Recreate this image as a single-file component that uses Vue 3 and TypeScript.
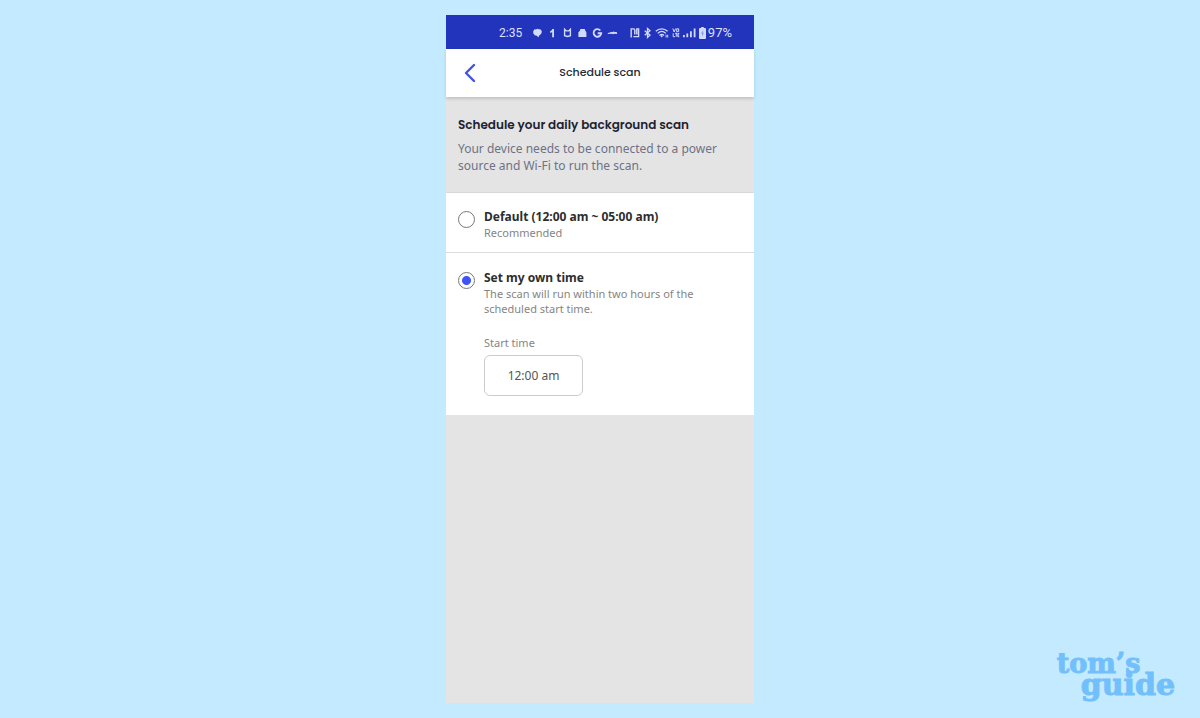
<script setup lang="ts">
import { ref } from 'vue'

interface ScanOption {
  id: string
  title: string
  note: string
}

const options: ScanOption[] = [
  { id: 'default', title: 'Default (12:00 am ~ 05:00 am)', note: 'Recommended' },
  {
    id: 'custom',
    title: 'Set my own time',
    note: 'The scan will run within two hours of the scheduled start time.',
  },
]

const selected = ref<string>('custom')
const startTime = ref<string>('12:00 am')
</script>

<template>
  <div class="stage">
    <main class="phone">
      <div class="status">
        <span class="clock">2:35</span>
        <div class="notices">
          <svg viewBox="0 0 15 12" aria-hidden="true"><path d="M4.5 2.3 6 2.6 7.3 1.7 8.9 2.2 10.7 2.6 11.8 4.3 11.5 6.3 10 8 8.9 8.8 8.5 10.4 6.8 8.7 4.8 8.2 3.3 6.5 3.2 4.2z" /></svg>
          <svg viewBox="0 0 15 12" aria-hidden="true"><path d="M7.3 2H9v8.2H7.2V5.2L5 5.8V4.4C6.2 4 7 3.3 7.3 2z" /></svg>
          <svg viewBox="0 0 15 12" aria-hidden="true"><path class="line" d="M4.6 2.2v6.4l2.9.8 2.9-.8V2.2L8.8 3.9H6.2z" /></svg>
          <svg viewBox="0 0 15 12" aria-hidden="true"><path d="M5.5 2h4.2l.8 2 .9 1.2v4.9h-8V5.2L4.7 4z" /></svg>
          <svg viewBox="0 0 15 12" aria-hidden="true"><path class="google" d="M10.3 3.5A3.8 3.8 0 1 0 11.2 6.2H7.7" /></svg>
          <svg viewBox="0 0 15 12" aria-hidden="true"><path d="M2.8 5.9 5 5.6 6 4.8 7.2 5.2 8.6 4.6 9.8 5.1 11.7 4.9 12.2 7 9.2 6.7 8 7.2 6.4 6.8 2.8 7z" /></svg>
        </div>
        <div class="system">
          <svg width="10" height="12" viewBox="0 0 10 12" aria-hidden="true"><path class="line" d="M1.2 10.4V1.9h2.4q1.2 0 1.2 1.2v4.5M3.4 9.6h5.2V1.9H6.8v5.5" /></svg>
          <svg width="9" height="12" viewBox="0 0 9 12" aria-hidden="true"><path class="thin bold" d="M1.7 3.7 7 8.1 4.5 10.4V1.5L7 3.8 1.7 8.2" /></svg>
          <svg width="14" height="12" viewBox="0 0 14 12" aria-hidden="true"><path class="thin bold" d="M.8 4.3c3.4-3.2 8.4-3.2 11.8 0M2.7 6.4c2.5-2.4 5.7-2.4 8.1 0M4.5 8.4c1.5-1.3 3-1.3 4.5 0" /><path d="m5.4 9 1.3-1L8 9l-1.3 1.5zM10.6 7.8h1v2.7h-1zM12.2 7.8h1v2.7h-1z" /></svg>
          <svg width="8" height="12" viewBox="0 0 8 12" aria-hidden="true"><path class="thin" d="M.8 1.5 2.2 5l1.4-3.5M4.7 1.8h2v2.9h-2zM1.2 6.3v3.4h2M3 6.3h2M4.3 6.3v3.4M7.3 6.5H5.8v3.2h1.5M5.8 8h1.3" /></svg>
          <svg width="13" height="12" viewBox="0 0 13 12" aria-hidden="true"><path d="M0 8h1.8v2.3H0zM3.4 6.6h1.8v3.7H3.4zM7 4.2h1.8v6.1H7zM10.7 1.5h1.8v8.8h-1.8z" /></svg>
          <svg width="7" height="12" viewBox="0 0 7 12" aria-hidden="true"><path d="M2.2 0h2.6v1H6a1 1 0 0 1 1 1v9a1 1 0 0 1-1 1H1a1 1 0 0 1-1-1V2a1 1 0 0 1 1-1h1.2z" /><path class="bolt" d="M4.4 2.8 2 6.5h1.3L2.8 10 5 5.8H3.7z" /></svg>
          <span class="percent">97%</span>
        </div>
      </div>

      <header class="bar">
        <button class="back" type="button" aria-label="Back">
          <svg width="12" height="20" viewBox="0 0 12 20" aria-hidden="true"><path d="M10 2 2 10l8 8" /></svg>
        </button>
        <h1>Schedule scan</h1>
      </header>

      <section class="intro">
        <h2>Schedule your daily background scan</h2>
        <p>Your device needs to be connected to a power source and Wi-Fi to run the scan.</p>
      </section>

      <form class="options" @submit.prevent>
        <div v-for="option in options" :key="option.id" class="option">
          <input :id="option.id" v-model="selected" type="radio" name="schedule" :value="option.id" />
          <div class="body">
            <label class="choice" :for="option.id">
              <span class="title">{{ option.title }}</span>
              <span class="note">{{ option.note }}</span>
            </label>
            <div v-if="option.id === 'custom'" class="start">
              <label for="start-time">Start time</label>
              <input id="start-time" v-model="startTime" type="text" />
            </div>
          </div>
        </div>
      </form>
    </main>

    <div class="brand"><span>tom’s</span><span class="second">guide</span></div>
  </div>
</template>

<style>
body {
  margin: 0;
  background: #c4eaff;
}
</style>

<style scoped>
.stage {
  box-sizing: border-box;
  min-height: 100vh;
  padding: 15px 0;
  display: grid;
  grid-template-columns: 446fr minmax(308px, 308fr) 446fr;
  background: #c4eaff;
  font-family: "Noto Sans", "Open Sans", sans-serif;
}

.phone {
  grid-column: 2;
  background: #e4e4e4;
}

.status {
  display: flex;
  align-items: center;
  justify-content: space-between;
  height: 34px;
  padding: 2px 22px 0 53px;
  box-sizing: border-box;
  background: #2233bc;
  color: #dce2ff;
  font: 13px/16px Roboto, sans-serif;
}

.clock {
  font-size: 12px;
}

.status svg {
  fill: #d3daff;
}

.status .line,
.status .thin,
.status .google {
  fill: none;
  stroke: #d3daff;
  stroke-width: 1.4;
}

.status .thin {
  stroke-width: 1;
}

.status .thin.bold {
  stroke-width: 1.3;
}

.status .google {
  stroke-width: 1.9;
}

.status .bolt {
  fill: #8793e0;
}

.notices {
  display: flex;
  margin-right: 2px;
}

.notices svg {
  width: 15px;
  height: 12px;
}

.system {
  display: flex;
  align-items: center;
  gap: 3px;
}

.percent {
  margin-left: -1px;
}

.bar {
  position: relative;
  display: grid;
  grid-template-columns: 48px 1fr 48px;
  align-items: center;
  height: 48px;
  background: #fff;
  box-shadow: 0 2px 3px rgba(0, 0, 0, 0.15);
}

.back {
  display: flex;
  justify-content: center;
  padding: 0;
  border: 0;
  background: none;
  cursor: pointer;
}

.back path {
  fill: none;
  stroke: #4353dd;
  stroke-width: 2.4;
  stroke-linecap: round;
  stroke-linejoin: round;
}

h1,
h2,
p {
  margin: 0;
}

h1 {
  padding-bottom: 2px;
  text-align: center;
  color: #252a36;
  font: 500 11px/18px Poppins, Inter, sans-serif;
}

.intro {
  padding: 18px 12px;
  border-bottom: 1px solid #d8d8d8;
}

h2 {
  margin-bottom: 5px;
  color: #1d2230;
  font: 600 12px/20px Poppins, Inter, sans-serif;
}

.intro p {
  color: #6d7286;
  font-size: 12px;
  line-height: 17px;
}

.options {
  background: #fff;
}

.option {
  display: flex;
  align-items: flex-start;
  gap: 9px;
  padding: 15px 12px 12px;
}

.option + .option {
  padding-top: 16px;
  padding-bottom: 19px;
  border-top: 1px solid #dcdcdc;
}

.option input[type='radio'] {
  appearance: none;
  flex: none;
  box-sizing: border-box;
  width: 17px;
  height: 17px;
  margin: 3px 0 0;
  border: 1px solid #777;
  border-radius: 50%;
  background: #fff;
}

.option input[type='radio']:checked {
  background: radial-gradient(circle, #4054f5 4px, #fff 5px);
}

.body {
  flex: 1;
}

.choice {
  display: flex;
  flex-direction: column;
}

.title {
  color: #2d2d2d;
  font-size: 12px;
  font-weight: 700;
  line-height: 17px;
}

.note,
.start label {
  color: #858585;
  font-size: 11px;
  line-height: 15px;
}

.start {
  display: flex;
  flex-direction: column;
  align-items: flex-start;
  gap: 5px;
  margin-top: 19px;
}

.start input {
  box-sizing: border-box;
  width: 99px;
  height: 41px;
  padding: 0;
  border: 1px solid #ccc;
  border-radius: 6px;
  background: #fff;
  color: #555;
  font: 12px/18px "Noto Sans", "Open Sans", sans-serif;
  text-align: center;
}

.brand {
  display: flex;
  flex-direction: column;
  align-self: end;
  justify-self: end;
  margin: 0 25px 8px 0;
  color: #72c0fb;
  font: bold 27px/21px "DejaVu Serif", serif;
  -webkit-text-stroke: 1px #72c0fb;
}

.brand .second {
  margin-left: 24px;
  font-size: 30px;
}
</style>
